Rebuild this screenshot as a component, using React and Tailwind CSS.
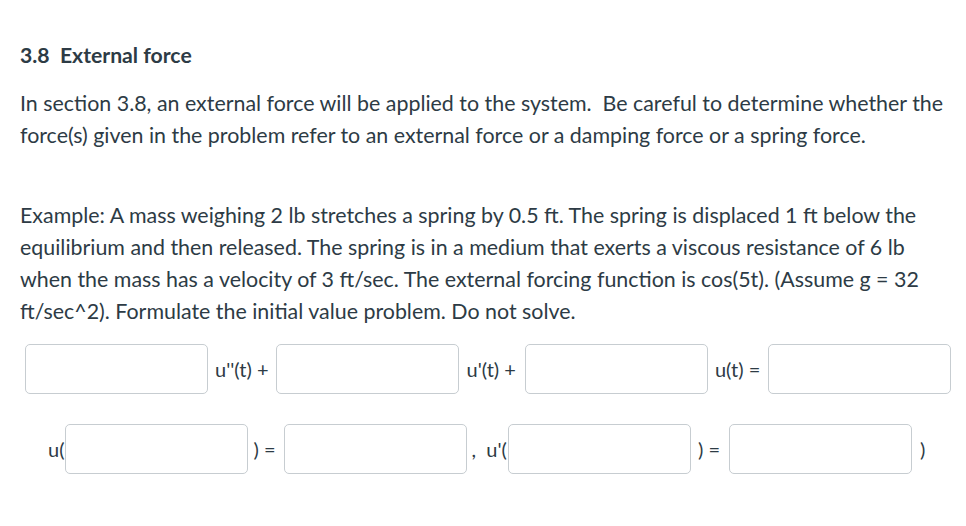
import React from 'react';

const Box = () => (
    <input
        type="text"
        className="w-[183px] h-[50px] shrink-0 rounded-[5px] border border-[#c7cdd1] bg-white"
    />
);

const App = () => {
    return (
        <div className="min-h-[526px] bg-white px-5 pt-[43px] text-[#2d3b45] font-['Lato',sans-serif]">
            <h2 className="text-[21.2px] font-bold leading-[24px] whitespace-pre">3.8  External force</h2>

            <p className="mt-[20px] text-[21.4px] leading-[32px] whitespace-pre-wrap">
                In section 3.8, an external force will be applied to the system.  Be careful to determine whether the force(s) given in the problem refer to an external force or a damping force or a spring force.
            </p>

            <p className="mt-[48px] text-[21.4px] leading-[32px]">
                Example: A mass weighing 2 lb stretches a spring by 0.5 ft. The spring is displaced 1 ft below the equilibrium and then released. The spring is in a medium that exerts a viscous resistance of 6 lb when the mass has a velocity of 3 ft/sec. The external forcing function is cos(5t). (Assume g = 32 ft/sec^2). Formulate the initial value problem. Do not solve.
            </p>

            {/* equation row */}
            <div className="mt-[17px] ml-[5px] flex items-center whitespace-nowrap text-[20px]">
                <Box />
                <span className="ml-[7px] mr-[7px]">u''(t) +</span>
                <Box />
                <span className="ml-[8px] mr-[9px]">u'(t) +</span>
                <Box />
                <span className="ml-[7px] mr-[8px]">u(t) =</span>
                <Box />
            </div>

            {/* initial conditions */}
            <div className="mt-[30px] ml-[28px] flex items-center whitespace-nowrap text-[20px]">
                <span>u(</span>
                <Box />
                <span className="ml-[6px] mr-[8px]">) =</span>
                <Box />
                <span className="ml-[5px] mr-[1px] whitespace-pre">,  u'(</span>
                <Box />
                <span className="ml-[7px] mr-[9px]">) =</span>
                <Box />
                <span className="ml-[8px]">)</span>
            </div>
        </div>
    );
};

export default App;
